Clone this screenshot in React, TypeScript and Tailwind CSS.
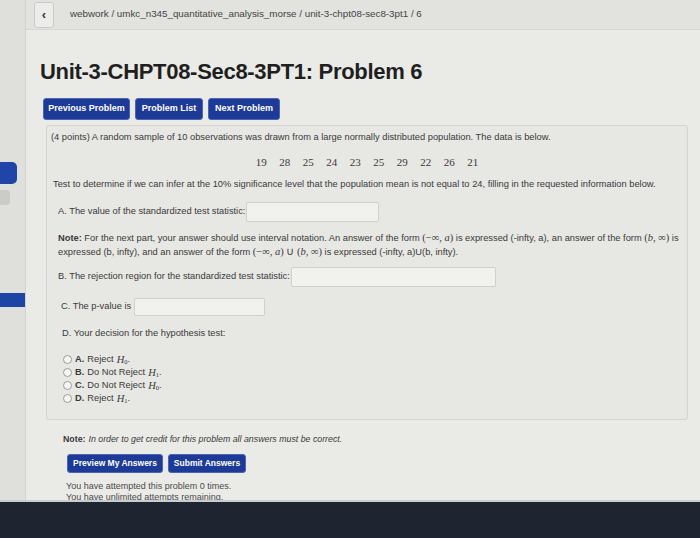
import type { ReactNode } from 'react'

const sans = "font-['Liberation_Sans',Arial,sans-serif]"
const serif = "font-['Liberation_Serif','Times_New_Roman',serif]"

function NavButton({ children, w, size = 'text-[9px]' }: { children: ReactNode; w: string; size?: string }) {
    return (
        <div
            className={`flex h-full items-center justify-center rounded-[3px] border border-[#4a64b8] bg-[#1c3a96] font-bold text-white ${size} ${w}`}
        >
            {children}
        </div>
    )
}

function AnswerBox({ w, h = 'h-[20px]' }: { w: string; h?: string }) {
    return <div className={`${w} ${h} shrink-0 rounded-[2px] border border-[#cfcfcb] bg-[#f1f1ee]`} />
}

function M({ children }: { children: ReactNode }) {
    return <span className={`${serif} text-[10.5px]`}>{children}</span>
}

function H({ sub }: { sub: string }) {
    return (
        <span className={`${serif} text-[10.5px] italic`}>
            H<sub className="text-[6.5px] not-italic">{sub}</sub>
        </span>
    )
}

function Choice({ letter, text, sub }: { letter: string; text: string; sub: string }) {
    return (
        <div className="flex h-[13px] items-center">
            <span className="mr-[3px] h-[9px] w-[9px] rounded-full border border-[#9a9a96] bg-[#f6f6f3]" />
            <span className="font-bold">{letter}.</span>
            <span className="ml-[3px]">{text}</span>
            <span className="ml-[3px]">
                <H sub={sub} />
            </span>
            <span>.</span>
        </div>
    )
}

const data = [19, 28, 25, 24, 23, 25, 29, 22, 26, 21]

export default function App() {
    return (
        <div className={`flex h-[538px] w-[700px] flex-col overflow-hidden bg-[#eaeae6] text-[#3a3a3a] ${sans}`}>
            <div className="flex h-[500px] shrink-0 overflow-hidden">
                {/* sidebar edge */}
                <div className="flex w-[26px] shrink-0 flex-col border-r border-[#d2d2ce] bg-[#dfdfdb]">
                    <div className="mt-[162px] h-[22px] w-[17px] rounded-r-[5px] bg-[#1f45a8]" />
                    <div className="mt-[6px] h-[15px] w-[10px] rounded-r-[3px] bg-[#cbcbc7]" />
                    <div className="mt-[88px] h-[14px] w-[25px] bg-[#1d45a3]" />
                </div>

                <div className="flex flex-1 flex-col [&>*]:shrink-0">
                    <div className="flex h-[30px] items-center border-b border-[#d6d6d2] bg-[#e2e2df]">
                        <div className="ml-[8px] flex h-[26px] w-[20px] items-center justify-center rounded-[3px] border border-[#cacac6] bg-[#ececea] text-[13px] font-bold text-[#333]">
                            ‹
                        </div>
                        <div className="ml-[16px] text-[9.8px] text-[#444]">
                            webwork / umkc_n345_quantitative_analysis_morse / unit-3-chpt08-sec8-3pt1 / 6
                        </div>
                    </div>

                    <h1 className="ml-[14px] mt-[30px] text-[22px] font-bold leading-[24px] tracking-[-0.3px] text-[#1f1f1f]">
                        Unit-3-CHPT08-Sec8-3PT1: Problem 6
                    </h1>

                    <div className="ml-[17px] mt-[14px] flex h-[22px] gap-[5px]">
                        <NavButton w="w-[87px]">Previous Problem</NavButton>
                        <NavButton w="w-[68px]">Problem List</NavButton>
                        <NavButton w="w-[72px]">Next Problem</NavButton>
                    </div>

                    <div className="ml-[20px] mt-[5px] w-[642px] rounded-[3px] border border-[#d3d3cf] bg-[#e7e7e3] pb-[14px] pt-[5px] text-[9.3px]">
                        <div className="ml-[4px] flex h-[14px] items-center">
                            (4 points) A random sample of 10 observations was drawn from a large normally distributed
                            population. The data is below.
                        </div>
                        <div className={`mt-[10px] flex h-[14px] items-center justify-center gap-[12.5px] text-[11px] ${serif}`}>
                            {data.map((n, i) => (
                                <span key={i}>{n}</span>
                            ))}
                        </div>
                        <div className="ml-[6px] mt-[9px] flex h-[14px] items-center">
                            Test to determine if we can infer at the 10% significance level that the population mean is
                            not equal to 24, filling in the requested information below.
                        </div>
                        <div className="ml-[11px] mt-[10px] flex h-[20px] items-center gap-[1px]">
                            <span>A. The value of the standardized test statistic:</span>
                            <AnswerBox w="w-[133px]" />
                        </div>
                        <div className="ml-[11px] mt-[9px] whitespace-nowrap leading-[14px]">
                            <div>
                                <b>Note:</b> For the next part, your answer should use interval notation. An answer of the
                                form <M>(−∞, <i>a</i>)</M> is expressed (-infty, a), an answer of the form{' '}
                                <M>
                                    (<i>b</i>, ∞)
                                </M>{' '}
                                is
                            </div>
                            <div>
                                expressed (b, infty), and an answer of the form{' '}
                                <M>
                                    (−∞, <i>a</i>) ∪ (<i>b</i>, ∞)
                                </M>{' '}
                                is expressed (-infty, a)U(b, infty).
                            </div>
                        </div>
                        <div className="ml-[11px] mt-[8px] flex h-[20px] items-center gap-[1px]">
                            <span>B. The rejection region for the standardized test statistic:</span>
                            <AnswerBox w="w-[205px]" />
                        </div>
                        <div className="ml-[14px] mt-[11px] flex h-[18px] items-center gap-[3px]">
                            <span>C. The p-value is</span>
                            <AnswerBox w="w-[131px]" h="h-[18px]" />
                        </div>
                        <div className="ml-[15px] mt-[11px] flex h-[14px] items-center">
                            D. Your decision for the hypothesis test:
                        </div>
                        <div className="ml-[16px] mt-[12px] flex flex-col">
                            <Choice letter="A" text="Reject" sub="0" />
                            <Choice letter="B" text="Do Not Reject" sub="1" />
                            <Choice letter="C" text="Do Not Reject" sub="0" />
                            <Choice letter="D" text="Reject" sub="1" />
                        </div>
                    </div>

                    <div className="ml-[37px] mt-[13px] flex h-[14px] items-center text-[8.8px]">
                        <b>Note:</b>
                        <i className="ml-[3px]">In order to get credit for this problem all answers must be correct.</i>
                    </div>
                    <div className="ml-[41px] mt-[7px] flex h-[19px] gap-[5px]">
                        <NavButton w="w-[96px]" size="text-[8.5px]">
                            Preview My Answers
                        </NavButton>
                        <NavButton w="w-[78px]" size="text-[8.5px]">
                            Submit Answers
                        </NavButton>
                    </div>
                    <div className="ml-[40px] mt-[8px] text-[9px] leading-[10.5px] text-[#4a4a4a]">
                        <div>You have attempted this problem 0 times.</div>
                        <div>You have unlimited attempts remaining.</div>
                    </div>
                </div>
            </div>

            <div className="h-[38px] border-t-2 border-[#c9ccd0] bg-[#1e2531]" />
        </div>
    )
}
